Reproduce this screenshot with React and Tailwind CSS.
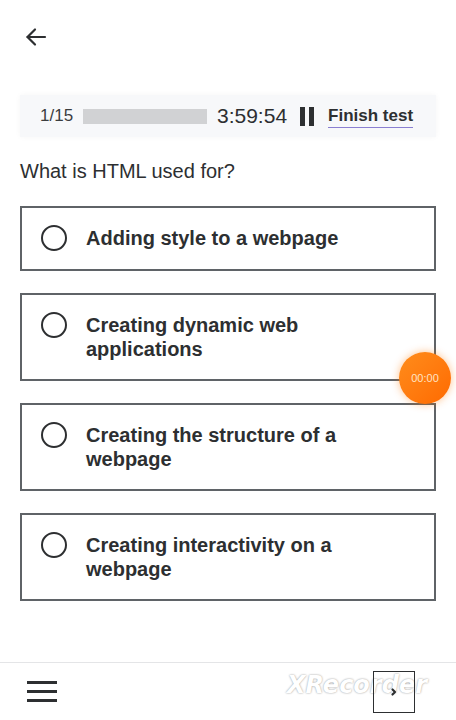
import { useState } from 'react';

const options = [
  'Adding style to a webpage',
  'Creating dynamic web applications',
  'Creating the structure of a webpage',
  'Creating interactivity on a webpage',
];

const font = { fontFamily: '"Liberation Sans", Arial, sans-serif' };

export default function App() {
  const [selected, setSelected] = useState(null);

  return (
    <div className="relative w-[456px] h-[720px] bg-white text-[#2d2f31] flex flex-col overflow-hidden" style={font}>
      {/* Back */}
      <div className="h-[74px] px-[24px] flex items-center">
        <svg width="24" height="24" viewBox="0 0 24 24" fill="none" stroke="#2d2f31" strokeWidth="2.2" strokeLinecap="round" strokeLinejoin="round">
          <path d="M21 12H3.5" />
          <path d="M11 4.5 3.5 12l7.5 7.5" />
        </svg>
      </div>

      {/* Progress bar */}
      <div className="mt-[21px] mx-[20px] h-[42px] bg-[#f7f8fa] shadow-[0_0_6px_rgba(0,0,0,0.04)] flex items-center pl-[20px] pr-[20px]">
        <span className="text-[17px] text-[#3b3d3f] w-[43px]">1/15</span>
        <div className="w-[124px] h-[15px] bg-[#d1d2d4]" />
        <span className="ml-[10px] text-[21px] text-[#2d2f31]">3:59:54</span>
        <div className="ml-[13px] flex gap-[4px]">
          <span className="w-[5px] h-[19px] bg-[#2d2f31]" />
          <span className="w-[5px] h-[19px] bg-[#2d2f31]" />
        </div>
        <span className="ml-[14px] text-[17px] font-bold border-b border-[#8a7fd1] leading-[22px]">Finish test</span>
      </div>

      {/* Question */}
      <p className="mt-[21px] mx-[20px] text-[20px] leading-[26px]">What is HTML used for?</p>

      <div className="mt-[22px] mx-[20px] flex flex-col gap-[22px]">
        {options.map((o, i) => (
          <button
            key={o}
            onClick={() => setSelected(i)}
            className="flex items-start text-left border-2 border-[#5f6367] pl-[19px] pr-[16px] py-[18px] min-h-[65px]"
          >
            <span className="mt-[-1px] w-[26px] h-[26px] shrink-0 rounded-full border-[2.5px] border-[#2d2f31] flex items-center justify-center">
              {selected === i && <span className="w-[12px] h-[12px] rounded-full bg-[#2d2f31]" />}
            </span>
            <span className="ml-[19px] text-[20px] font-bold leading-[24px] max-w-[275px]">{o}</span>
          </button>
        ))}
      </div>

      {/* Recorder bubble */}
      <div className="absolute left-[399px] top-[352px] w-[52px] h-[52px] rounded-full bg-gradient-to-br from-[#ff8c1a] to-[#ff6a00] shadow-[0_0_8px_rgba(255,120,0,0.45)] flex items-center justify-center">
        <span className="text-[11px] text-[#ffe3c4]">00:00</span>
      </div>

      {/* Bottom bar */}
      <div className="mt-auto h-[58px] border-t border-[#e4e5e7] flex items-center justify-between pl-[27px] pr-[41px]">
        <div className="flex flex-col gap-[6px]">
          <span className="w-[30px] h-[3px] bg-[#2d2f31]" />
          <span className="w-[30px] h-[3px] bg-[#2d2f31]" />
          <span className="w-[30px] h-[3px] bg-[#2d2f31]" />
        </div>
        <div className="relative flex items-center">
          <span className="absolute right-[-12px] top-[-4px] text-[24px] font-bold italic text-white whitespace-nowrap [text-shadow:0_0_2px_rgba(0,0,0,0.45)] pointer-events-none" style={{ fontFamily: '"DejaVu Sans", sans-serif' }}>XRecorder</span>
          <div className="relative w-[42px] h-[42px] border-[1.5px] border-[#2d2f31] flex items-center justify-center">
            <svg width="12" height="12" viewBox="0 0 12 12" fill="none" stroke="#2d2f31" strokeWidth="2.2" strokeLinecap="round" strokeLinejoin="round">
              <path d="M4.5 3.5 7 6l-2.5 2.5" />
            </svg>
          </div>
        </div>
      </div>
    </div>
  );
}
